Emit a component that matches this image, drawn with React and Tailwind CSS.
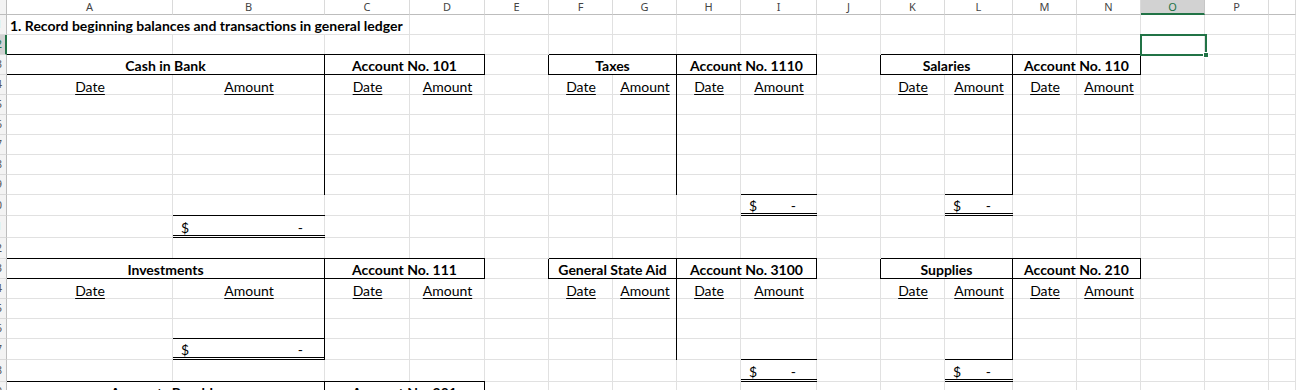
import React from 'react';

const COLS = ['', 'col-start-1', 'col-start-2', 'col-start-3', 'col-start-4', 'col-start-5', 'col-start-6', 'col-start-7', 'col-start-8', 'col-start-9', 'col-start-10', 'col-start-11', 'col-start-12', 'col-start-13', 'col-start-14', 'col-start-15', 'col-start-16', 'col-start-17', 'col-start-18'];
const ROWS = ['', 'row-start-1', 'row-start-2', 'row-start-3', 'row-start-4', 'row-start-5', 'row-start-6', 'row-start-7', 'row-start-8', 'row-start-9', 'row-start-10', 'row-start-11', 'row-start-12', 'row-start-13', 'row-start-14', 'row-start-15', 'row-start-16', 'row-start-17', 'row-start-18', 'row-start-19', 'row-start-20'];
const LETTERS = ['', '', 'A', 'B', 'C', 'D', 'E', 'F', 'G', 'H', 'I', 'J', 'K', 'L', 'M', 'N', 'O', 'P', ''];

const CELL_FONT = '[font-family:Lato,Carlito,sans-serif] text-[14px] leading-[14px] text-black';

function BaseCell({ r, c }) {
  const pos = `${COLS[c]} ${ROWS[r]}`;
  if (r === 1 && c === 1) {
    return <div className={`${pos} bg-[#f3f3f3] border-r border-b border-[#bdbdbd]`} />;
  }
  if (r === 1) {
    if (c === 16) {
      return (
        <div className={`${pos} flex items-start justify-center bg-[#d2d2d2] border-r border-r-[#c6c6c6] border-b-2 border-b-[#217346] [font-family:'Noto_Sans',sans-serif] text-[11px] leading-[11px] text-[#217346] pt-[1px]`}>
          {LETTERS[c]}
        </div>
      );
    }
    return (
      <div className={`${pos} flex items-start justify-center bg-white border-r border-r-[#dadada] border-b border-b-[#bdbdbd] [font-family:'Noto_Sans',sans-serif] text-[11px] leading-[11px] text-[#444444] pt-[1px]`}>
        {LETTERS[c]}
      </div>
    );
  }
  if (c === 1) {
    if (r === 3) {
      return (
        <div className={`${pos} flex items-center justify-end overflow-hidden whitespace-nowrap bg-[#d2d2d2] border-b border-b-[#dadada] border-r-2 border-r-[#217346] [font-family:'Noto_Sans',sans-serif] text-[11px] text-[#217346] pr-[3px]`}>
          {r - 1}
        </div>
      );
    }
    return (
      <div className={`${pos} flex items-center justify-end overflow-hidden whitespace-nowrap bg-[#f3f3f3] border-b border-b-[#dadada] border-r border-r-[#bdbdbd] [font-family:'Noto_Sans',sans-serif] text-[11px] text-[#555555] pr-[4px]`}>
        {r - 1}
      </div>
    );
  }
  return <div className={`${pos} bg-white border-r border-b border-[#e1e1e1]`} />;
}

function Title({ cls, children }) {
  return (
    <div className={`${cls} flex items-end justify-center bg-white border-r border-b border-black font-bold ${CELL_FONT} pb-[1px] whitespace-nowrap`}>
      {children}
    </div>
  );
}

function Label({ cls, children }) {
  return (
    <div className={`${cls} flex items-end justify-center ${CELL_FONT} pb-[1px]`}>
      <span className="underline decoration-1 underline-offset-[2px]">{children}</span>
    </div>
  );
}

function Total({ cls, pr }) {
  return (
    <div className={`${cls} flex items-end justify-between border-b-[3px] border-double border-black ${CELL_FONT} pl-[8px] ${pr}`}>
      <span>$</span>
      <span>-</span>
    </div>
  );
}

function Line({ cls }) {
  return <div className={`${cls} border-black`} />;
}

export default function App() {
  const base = [];
  for (let r = 1; r <= 20; r++) {
    for (let c = 1; c <= 18; c++) {
      base.push(<BaseCell key={`${r}-${c}`} r={r} c={c} />);
    }
  }

  return (
    <div className="w-[1296px] h-[390px] overflow-hidden bg-white">
      <div className="grid grid-cols-[7px_166px_152px_85px_75px_64px_64px_64px_64px_76px_64px_64px_68px_64px_64px_64px_64px_27px] grid-rows-[15px_20px_20px_20px_20px_20px_20px_20px_20px_20px_21px_22px_21px_20px_20px_20px_20px_21px_22px_20px]">
        {base}

        {/* Row 1 title */}
        <div className={`col-start-2 col-span-3 row-start-2 flex items-end bg-white border-r border-b border-[#e1e1e1] font-bold ${CELL_FONT} pl-[3px] pb-[1px] whitespace-nowrap`}>
          1. Record beginning balances and transactions in general ledger
        </div>

        {/* Top block frames */}
        <Line cls="col-start-2 col-span-4 row-start-3 border-b" />
        <Line cls="col-start-7 col-span-4 row-start-3 border-b" />
        <Line cls="col-start-12 col-span-4 row-start-3 border-b" />
        <Line cls="col-start-6 row-start-4 border-r" />
        <Line cls="col-start-11 row-start-4 border-r" />

        <Title cls="col-start-2 col-span-2 row-start-4">Cash in Bank</Title>
        <Title cls="col-start-4 col-span-2 row-start-4">Account No. 101</Title>
        <Title cls="col-start-7 col-span-2 row-start-4">Taxes</Title>
        <Title cls="col-start-9 col-span-2 row-start-4">Account No. 1110</Title>
        <Title cls="col-start-12 col-span-2 row-start-4">Salaries</Title>
        <Title cls="col-start-14 col-span-2 row-start-4">Account No. 110</Title>

        <Label cls="col-start-2 row-start-5">Date</Label>
        <Label cls="col-start-3 row-start-5">Amount</Label>
        <Label cls="col-start-4 row-start-5">Date</Label>
        <Label cls="col-start-5 row-start-5">Amount</Label>
        <Label cls="col-start-7 row-start-5">Date</Label>
        <Label cls="col-start-8 row-start-5">Amount</Label>
        <Label cls="col-start-9 row-start-5">Date</Label>
        <Label cls="col-start-10 row-start-5">Amount</Label>
        <Label cls="col-start-12 row-start-5">Date</Label>
        <Label cls="col-start-13 row-start-5">Amount</Label>
        <Label cls="col-start-14 row-start-5">Date</Label>
        <Label cls="col-start-15 row-start-5">Amount</Label>

        <Line cls="col-start-3 row-start-5 row-span-6 border-r" />
        <Line cls="col-start-8 row-start-5 row-span-6 border-r" />
        <Line cls="col-start-13 row-start-5 row-span-6 border-r" />

        <Line cls="col-start-3 row-start-11 border-b" />
        <Total cls="col-start-3 row-start-12" pr="pr-[22px]" />
        <Line cls="col-start-10 row-start-10 border-b" />
        <Total cls="col-start-10 row-start-11" pr="pr-[21px]" />
        <Line cls="col-start-13 row-start-10 border-b" />
        <Total cls="col-start-13 row-start-11" pr="pr-[22px]" />

        {/* Bottom block frames */}
        <Line cls="col-start-2 col-span-4 row-start-13 border-b" />
        <Line cls="col-start-7 col-span-4 row-start-13 border-b" />
        <Line cls="col-start-12 col-span-4 row-start-13 border-b" />
        <Line cls="col-start-6 row-start-14 border-r" />
        <Line cls="col-start-11 row-start-14 border-r" />

        <Title cls="col-start-2 col-span-2 row-start-14">Investments</Title>
        <Title cls="col-start-4 col-span-2 row-start-14">Account No. 111</Title>
        <Title cls="col-start-7 col-span-2 row-start-14">General State Aid</Title>
        <Title cls="col-start-9 col-span-2 row-start-14">Account No. 3100</Title>
        <Title cls="col-start-12 col-span-2 row-start-14">Supplies</Title>
        <Title cls="col-start-14 col-span-2 row-start-14">Account No. 210</Title>

        <Label cls="col-start-2 row-start-15">Date</Label>
        <Label cls="col-start-3 row-start-15">Amount</Label>
        <Label cls="col-start-4 row-start-15">Date</Label>
        <Label cls="col-start-5 row-start-15">Amount</Label>
        <Label cls="col-start-7 row-start-15">Date</Label>
        <Label cls="col-start-8 row-start-15">Amount</Label>
        <Label cls="col-start-9 row-start-15">Date</Label>
        <Label cls="col-start-10 row-start-15">Amount</Label>
        <Label cls="col-start-12 row-start-15">Date</Label>
        <Label cls="col-start-13 row-start-15">Amount</Label>
        <Label cls="col-start-14 row-start-15">Date</Label>
        <Label cls="col-start-15 row-start-15">Amount</Label>

        <Line cls="col-start-3 row-start-15 row-span-4 border-r" />
        <Line cls="col-start-8 row-start-15 row-span-4 border-r" />
        <Line cls="col-start-13 row-start-15 row-span-4 border-r" />

        <Line cls="col-start-3 row-start-17 border-b" />
        <Total cls="col-start-3 row-start-18" pr="pr-[22px]" />
        <Line cls="col-start-10 row-start-18 border-b" />
        <Total cls="col-start-10 row-start-19" pr="pr-[21px]" />
        <Line cls="col-start-13 row-start-18 border-b" />
        <Total cls="col-start-13 row-start-19" pr="pr-[22px]" />

        {/* Row 19 partially visible */}
        <Line cls="col-start-2 col-span-4 row-start-19 border-b" />
        <Title cls="col-start-2 col-span-2 row-start-20">Accounts Payable</Title>
        <Title cls="col-start-4 col-span-2 row-start-20">Account No. 201</Title>

        {/* Selected cell O2 */}
        <div className="col-start-16 row-start-3 relative -ml-px -mt-px -mb-px -mr-[2px] border-2 border-[#217346]">
          <div className="absolute -right-[4px] -bottom-[4px] w-[6px] h-[6px] bg-[#217346] border border-white" />
        </div>
      </div>
    </div>
  );
}
